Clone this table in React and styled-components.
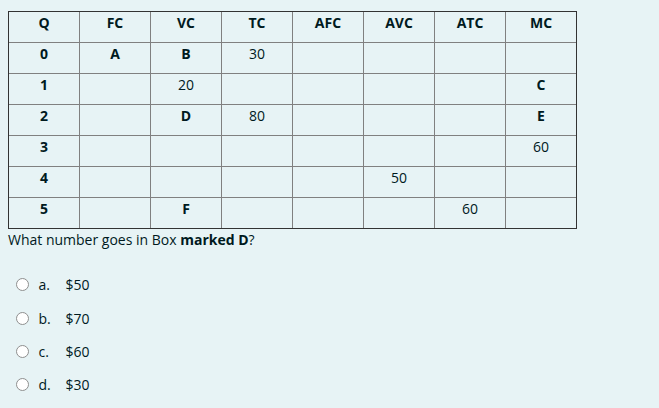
import React from "react";
import styled, { createGlobalStyle } from "styled-components";

const Global = createGlobalStyle`
  html, body { margin: 0; padding: 0; background: #e7f3f5; }
  body { font-family: "Open Sans", "Liberation Sans", sans-serif; color: #001a1e; }
`;

const Page = styled.div`
  background: #e7f3f5;
  min-height: 408px;
  padding: 11px 8px 0;
  box-sizing: border-box;
  font-size: 14px;
  line-height: 21px;
`;

const Table = styled.table`
  border-collapse: separate;
  border-spacing: 0;
  border: 1px solid #333;
  table-layout: fixed;
`;

const Cell = styled.td`
  width: 70px;
  height: 30px;
  padding: 0;
  text-align: center;
  vertical-align: top;
  font-weight: ${(p) => (p.$bold ? 700 : 400)};
  border-right: ${(p) => (p.$lastCol ? "none" : "1px solid #808080")};
  border-bottom: ${(p) => (p.$lastRow ? "none" : "1px solid #808080")};
`;

const Question = styled.p`
  margin: 0;
  padding-top: 0;
`;

const Options = styled.div`
  display: flex;
  flex-direction: column;
  padding-top: 18px;
`;

const Option = styled.label`
  display: flex;
  align-items: center;
  height: 33.4px;
  padding-left: 7.5px;
`;

const Radio = styled.span`
  width: 11px;
  height: 11px;
  border: 1px solid #8f8f8f;
  border-radius: 50%;
  background: #fff;
  margin-right: 10px;
  flex: none;
`;

const Letter = styled.span`
  width: 27px;
`;

const headers = ["Q", "FC", "VC", "TC", "AFC", "AVC", "ATC", "MC"];
const rows = [
  [["0", 1], ["A", 1], ["B", 1], ["30", 0], ["", 0], ["", 0], ["", 0], ["", 0]],
  [["1", 1], ["", 0], ["20", 0], ["", 0], ["", 0], ["", 0], ["", 0], ["C", 1]],
  [["2", 1], ["", 0], ["D", 1], ["80", 0], ["", 0], ["", 0], ["", 0], ["E", 1]],
  [["3", 1], ["", 0], ["", 0], ["", 0], ["", 0], ["", 0], ["", 0], ["60", 0]],
  [["4", 1], ["", 0], ["", 0], ["", 0], ["", 0], ["50", 0], ["", 0], ["", 0]],
  [["5", 1], ["", 0], ["F", 1], ["", 0], ["", 0], ["", 0], ["60", 0], ["", 0]],
];

const options = [
  ["a.", "$50"],
  ["b.", "$70"],
  ["c.", "$60"],
  ["d.", "$30"],
];

export default function App() {
  return (
    <Page>
      <Global />
      <Table>
        <tbody>
          <tr>
            {headers.map((h, i) => (
              <Cell key={h} $bold $lastCol={i === 7}>
                {h}
              </Cell>
            ))}
          </tr>
          {rows.map((r, ri) => (
            <tr key={ri}>
              {r.map(([v, b], ci) => (
                <Cell
                  key={ci}
                  $bold={!!b}
                  $lastCol={ci === 7}
                  $lastRow={ri === rows.length - 1}
                >
                  {v}
                </Cell>
              ))}
            </tr>
          ))}
        </tbody>
      </Table>
      <Question>
        What number goes in Box <b>marked D</b>?
      </Question>
      <Options>
        {options.map(([l, t]) => (
          <Option key={l}>
            <Radio />
            <Letter>{l}</Letter>
            <span>{t}</span>
          </Option>
        ))}
      </Options>
    </Page>
  );
}
